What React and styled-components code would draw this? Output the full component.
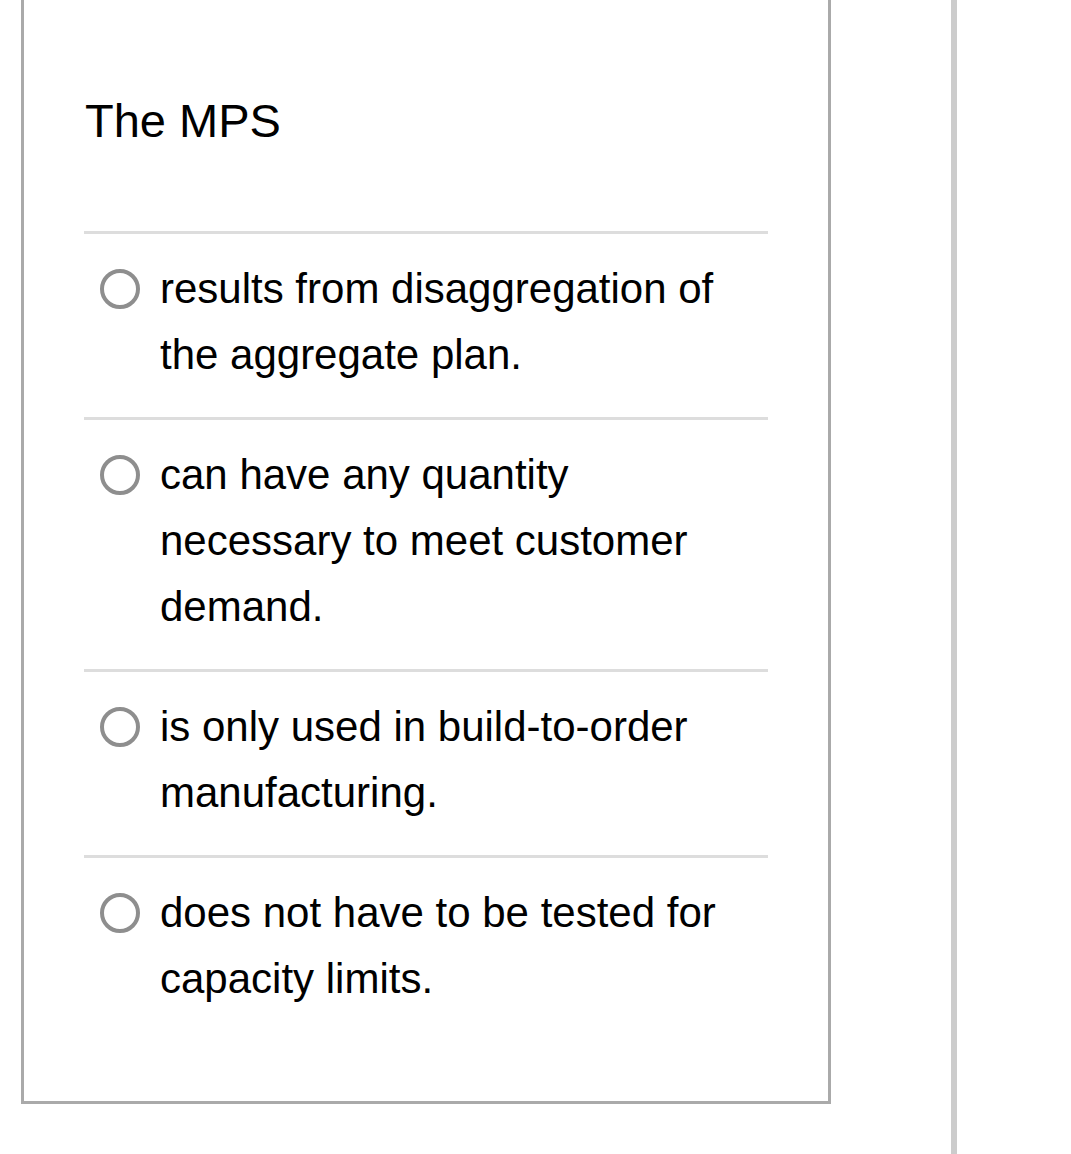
import styled, { createGlobalStyle } from 'styled-components'

const GlobalStyle = createGlobalStyle`
  html, body {
    margin: 0;
    padding: 0;
    background: #fff;
  }
  body {
    font-family: "Liberation Sans", Arial, sans-serif;
    color: #000;
  }
`

const Page = styled.div`
  display: flex;
  align-items: stretch;
  min-height: 1154px;
  padding-left: 21px;
`

const Card = styled.section`
  box-sizing: border-box;
  width: 810px;
  height: 1104px;
  border: 3px solid #aaa;
  border-top: none;
  padding: 94px 60px 0;
`

const Question = styled.h2`
  margin: 0 0 83px 1px;
  font-size: 47px;
  font-weight: 400;
  line-height: 54px;
`

const Options = styled.ul`
  list-style: none;
  margin: 0;
  padding: 0;
`

const Option = styled.li`
  display: flex;
  align-items: flex-start;
  gap: 20px;
  border-top: 3px solid #ddd;
  padding: 22px 0 29px 16px;
`

const Radio = styled.span`
  flex: none;
  box-sizing: border-box;
  width: 40px;
  height: 40px;
  margin-top: 13px;
  border: 4px solid #8e8e8e;
  border-radius: 50%;
`

const Label = styled.span`
  font-size: 42px;
  line-height: 66px;
  max-width: 590px;
`

const SideRule = styled.div`
  width: 6px;
  margin-left: 120px;
  background: #ccc;
`

const answers = [
  'results from disaggregation of the aggregate plan.',
  'can have any quantity necessary to meet customer demand.',
  'is only used in build-to-order manufacturing.',
  'does not have to be tested for capacity limits.',
]

function App() {
  return (
    <>
      <GlobalStyle />
      <Page>
        <Card>
          <Question>The MPS</Question>
          <Options>
            {answers.map((a) => (
              <Option key={a}>
                <Radio />
                <Label>{a}</Label>
              </Option>
            ))}
          </Options>
        </Card>
        <SideRule />
      </Page>
    </>
  )
}

export default App
